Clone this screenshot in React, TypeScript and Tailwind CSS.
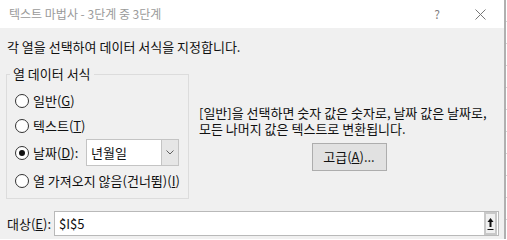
import React from "react";

const font = { fontFamily: '"Noto Sans CJK KR", "Noto Sans", sans-serif' };

function Radio({ checked = false }: { checked?: boolean }) {
  return (
    <span className="flex h-[14px] w-[14px] shrink-0 items-center justify-center rounded-full border border-[#333333] bg-white">
      {checked ? <span className="h-[6px] w-[6px] rounded-full bg-[#111111]" /> : null}
    </span>
  );
}

function Key({ k }: { k: string }) {
  return (
    <>
      (<span className="underline underline-offset-[1px]">{k}</span>)
    </>
  );
}

function RadioRow({
  label,
  k,
  checked,
  suffix,
  children,
  tall,
}: {
  label: string;
  k: string;
  checked?: boolean;
  suffix?: string;
  children?: React.ReactNode;
  tall?: boolean;
}) {
  return (
    <div className={tall ? "flex h-[27px] items-center" : "flex h-[24px] items-center"}>
      <span className="ml-[9px] mr-[4px]">
        <Radio checked={checked} />
      </span>
      <span className={tall ? "w-[53px] shrink-0 whitespace-nowrap" : "whitespace-nowrap"}>
        {label}
        <Key k={k} />
        {suffix}
      </span>
      {children}
    </div>
  );
}

export default function App() {
  return (
    <div
      className="flex h-[239px] w-[507px] overflow-hidden bg-[#f0f0f0] text-[13px] leading-[16px] text-[#111111]"
      style={font}
    >
      <div className="flex w-[504px] flex-col">
        {/* title bar */}
        <div className="flex h-[28px] shrink-0 items-center bg-white pl-[9px] text-[12px] text-[#9a9a9a]">
          <span className="flex-1 whitespace-nowrap">텍스트 마법사 - 3단계 중 3단계</span>
          <span className="mr-[35px] text-[12px] text-[#808080]">?</span>
          <svg width="11" height="11" viewBox="0 0 11 11" className="mr-[18px]">
            <path d="M0.5 0.5 L10.5 10.5 M10.5 0.5 L0.5 10.5" stroke="#777777" strokeWidth="1" />
          </svg>
        </div>

        <div className="flex flex-1 flex-col pl-[6px] pr-[5px]">
          <p className="mt-[11px] whitespace-nowrap pl-[1px]">각 열을 선택하여 데이터 서식을 지정합니다.</p>

          <div className="mt-[11px] flex">
            <fieldset className="w-[183px] shrink-0 border border-[#dcdcdc] pb-[5px] pl-[3px] pr-0 pt-0">
              <legend className="px-[3px] whitespace-nowrap">열 데이터 서식</legend>
              <div className="mt-[7px] ml-[-4px] flex flex-col">
                <RadioRow label="일반" k="G" />
                <div className="h-[1px]" />
                <RadioRow label="텍스트" k="T" />
                <div className="h-[1px]" />
                <RadioRow label="날짜" k="D" suffix=":" checked tall>
                  <div className="flex h-[27px] w-[93px] border border-[#c4c4c4] bg-white">
                    <span className="flex flex-1 items-center pl-[4px]">년월일</span>
                    <span className="flex w-[17px] items-center justify-center border-l border-[#c4c4c4] bg-[#e6e6e6]">
                      <svg width="8" height="5" viewBox="0 0 8 5">
                        <path d="M0.5 0.5 L4 4 L7.5 0.5" fill="none" stroke="#606060" strokeWidth="1" />
                      </svg>
                    </span>
                  </div>
                </RadioRow>
                <div className="h-[3px]" />
                <RadioRow label="열 가져오지 않음(건너뜀)" k="I" />
              </div>
            </fieldset>

            <div className="flex flex-1 flex-col pl-[10px]">
              <p className="mt-[39px] whitespace-nowrap leading-[16px]">
                [일반]을 선택하면 숫자 값은 숫자로, 날짜 값은 날짜로,
                <br />
                모든 나머지 값은 텍스트로 변환됩니다.
              </p>
              <button
                type="button"
                className="mt-[6px] flex h-[28px] w-[75px] items-center justify-center self-center border border-[#adadad] bg-[#e1e1e1] text-[#111111]"
              >
                고급<Key k="A" />...
              </button>
            </div>
          </div>

          <div className="mt-[12px] flex items-center">
            <span className="w-[48px] shrink-0 whitespace-nowrap pl-[1px]">
              대상<Key k="E" />:
            </span>
            <div className="flex h-[25px] flex-1 border border-[#b9b9b9] bg-white">
              <span className="flex flex-1 items-center pl-[4px]">$I$5</span>
              <span className="mr-[1px] flex w-[13px] items-center justify-center border-2 border-[#c8c8c8] bg-[#f0f0f0]">
                <svg width="7" height="14" viewBox="0 0 7 14">
                  <path d="M3.5 1 L6.5 5 L4.5 5 L4.5 10 L2.5 10 L2.5 5 L0.5 5 Z" fill="#111111" />
                  <path d="M0.5 12.5 L6.5 12.5" stroke="#111111" strokeWidth="1" />
                </svg>
              </span>
            </div>
          </div>
        </div>
      </div>

      {/* sheet behind the dialog */}
      <div className="flex w-[3px] flex-col border-l-2 border-[#b0b0b0] bg-white">
        {Array.from({ length: 11 }).map((_, i) => (
          <div key={i} className="h-[22px] shrink-0 border-b border-[#d4d4d4]" />
        ))}
      </div>
    </div>
  );
}
